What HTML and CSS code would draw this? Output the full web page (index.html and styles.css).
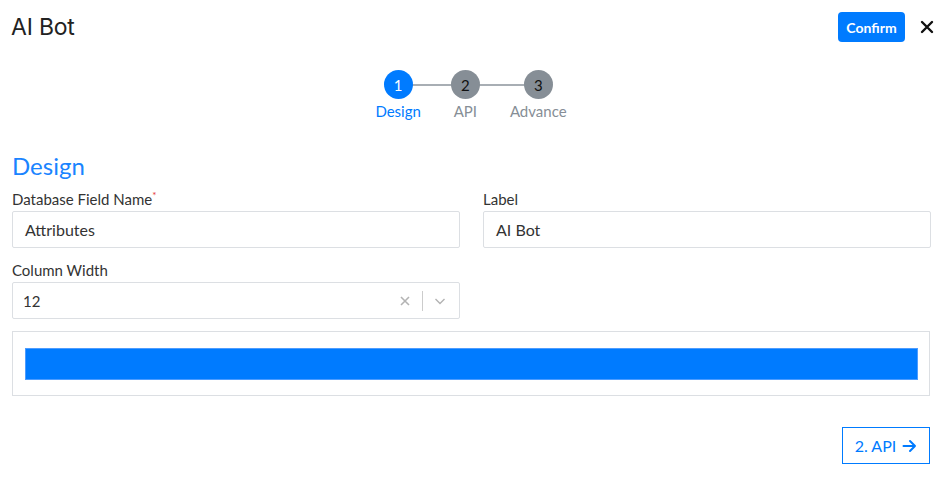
FILE: index.html
```html
<!DOCTYPE html>
<html>
<head>
<meta charset="utf-8">
<link rel="stylesheet" href="styles.css">
</head>
<body>
<div class="modal">
  <div class="header">
    <div class="title">AI Bot</div>
    <div class="header-actions">
      <button class="btn-confirm">Confirm</button>
      <span class="close">
        <svg width="14" height="14" viewBox="0 0 14 14"><path d="M2 2L12 12M12 2L2 12" stroke="#111" stroke-width="2.4" stroke-linecap="round"/></svg>
      </span>
    </div>
  </div>

  <div class="stepper">
    <div class="step active linked">
      <div class="circle">1</div>
      <div class="step-label">Design</div>
    </div>
    <div class="step linked">
      <div class="circle">2</div>
      <div class="step-label">API</div>
    </div>
    <div class="step">
      <div class="circle">3</div>
      <div class="step-label">Advance</div>
    </div>
  </div>

  <h2 class="section-title">Design</h2>

  <div class="grid">
    <div class="field">
      <label class="label">Database Field Name<sup class="req">*</sup></label>
      <div class="input">Attributes</div>
    </div>
    <div class="field">
      <label class="label">Label</label>
      <div class="input">AI Bot</div>
    </div>
    <div class="field">
      <label class="label">Column Width</label>
      <div class="select">
        <span class="select-value">12</span>
        <span class="select-icons">
          <svg class="clear" width="12" height="12" viewBox="0 0 12 12"><path d="M2 2L10 10M10 2L2 10" stroke="#b3b3b3" stroke-width="1.6"/></svg>
          <span class="sep"></span>
          <svg class="chev" width="14" height="14" viewBox="0 0 14 14"><path d="M2.5 5L7 9.5L11.5 5" stroke="#b3b3b3" stroke-width="1.4" fill="none"/></svg>
        </span>
      </div>
    </div>
  </div>

  <div class="panel">
    <div class="bar"></div>
  </div>

  <div class="footer">
    <button class="btn-next">2. API
      <svg width="15" height="14" viewBox="0 0 15 14"><path d="M1.5 7H13M8 2L13 7L8 12" stroke="#007bff" stroke-width="2" fill="none" stroke-linecap="round" stroke-linejoin="round"/></svg>
    </button>
  </div>
</div>
</body>
</html>
```

FILE: styles.css
```css
* { box-sizing: border-box; }
html, body { margin: 0; padding: 0; background: #fff; }
body {
  font-family: Lato, "Open Sans", Arial, sans-serif;
  color: #333;
  width: 942px;
  height: 481px;
  overflow: hidden;
}
.modal { padding: 0 12px 0 12px; }
.header {
  display: flex;
  align-items: center;
  justify-content: space-between;
  height: 54px;
}
.title {
  font-family: Inter, "Noto Sans", sans-serif;
  font-size: 23px;
  color: #222;
  margin-left: -1px;
  letter-spacing: -0.2px;
}
.header-actions { display: flex; align-items: center; gap: 15px; }
.btn-confirm {
  background: #007bff;
  color: #fff;
  border: none;
  border-radius: 4px;
  height: 30px;
  width: 67px;
  font-family: Lato, sans-serif;
  font-size: 14px;
  font-weight: 700;
  padding: 0;
  cursor: pointer;
}
.close { display: flex; align-items: center; margin-right: -4px; }

.stepper {
  display: flex;
  justify-content: center;
  align-items: flex-start;
  gap: 30px;
  margin-top: 16px;
  padding-left: 0;
}
.step {
  display: flex;
  flex-direction: column;
  align-items: center;
  position: relative;
}
.step.linked::after {
  content: "";
  position: absolute;
  left: 50%;
  top: 14px;
  width: 68px;
  height: 2px;
  background: #a8aeb4;
  z-index: 0;
}
.circle {
  width: 29px;
  height: 29px;
  border-radius: 50%;
  background: #868e96;
  color: #111;
  font-size: 15px;
  display: flex;
  align-items: center;
  justify-content: center;
  position: relative;
  z-index: 1;
}
.step.active .circle { background: #007bff; color: #fff; }
.step-label {
  font-size: 15px;
  color: #868e96;
  margin-top: 3px;
  white-space: nowrap;
}
.step.active .step-label { color: #007bff; }

.section-title {
  font-weight: 400;
  font-size: 24px;
  color: #1a84ff;
  margin: 30px 0 0 0;
  line-height: 32px;
}
.grid {
  display: grid;
  grid-template-columns: 448px 448px;
  column-gap: 23px;
  row-gap: 13px;
  margin-top: 8px;
}
.label {
  display: block;
  font-size: 15px;
  color: #333;
  line-height: 18px;
  margin-bottom: 3px;
}
.req { color: #e53935; font-size: 10px; vertical-align: top; position: relative; top: -4px; }
.input, .select {
  height: 37px;
  border: 1px solid #dcdfe3;
  border-radius: 2px;
  font-size: 16px;
  color: #333;
  display: flex;
  align-items: center;
  padding-left: 12px;
}
.select { padding-left: 10px; justify-content: space-between; padding-right: 12px; }
.select-value { font-size: 15px; }
.select-icons { display: flex; align-items: center; }
.clear { margin-right: 11px; }
.sep { width: 1px; height: 20px; background: #ccc; margin-right: 10px; }

.panel {
  margin-top: 12px;
  height: 65px;
  border: 1px solid #dcdfe3;
  padding: 16px 11px 16px 12px;
}
.bar {
  height: 32px;
  background: #007bff;
  border: 1px solid #4d9cff;
}
.footer {
  display: flex;
  justify-content: flex-end;
  margin-top: 31px;
}
.btn-next {
  height: 37px;
  width: 88px;
  background: #fff;
  border: 1.5px solid #007bff;
  color: #007bff;
  border-radius: 0;
  font-family: Lato, sans-serif;
  font-size: 16px;
  display: flex;
  align-items: center;
  justify-content: center;
  gap: 6px;
  padding: 0;
}
```
